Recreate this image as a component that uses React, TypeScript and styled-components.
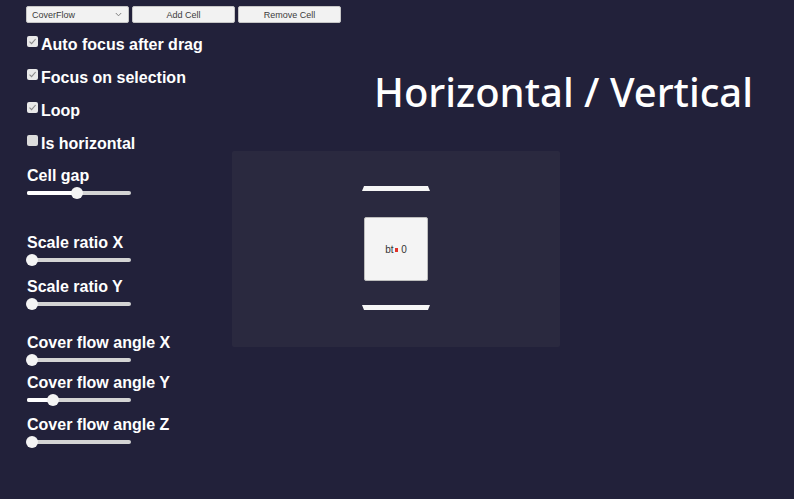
import React from 'react';
import styled, { createGlobalStyle } from 'styled-components';

const GlobalStyle = createGlobalStyle`
  html, body {
    margin: 0;
    padding: 0;
    background: #22213a;
    width: 794px;
    height: 499px;
    overflow: hidden;
  }
  body {
    font-family: "Liberation Sans", Arial, sans-serif;
  }
`;

const Page = styled.div`
  width: 794px;
  height: 499px;
  background: #22213a;
  display: flex;
  flex-direction: column;
`;

const Toolbar = styled.div`
  display: flex;
  gap: 3px;
  padding: 6px 0 0 26px;
`;

const Control = styled.div<{ $width: number }>`
  width: ${(p) => p.$width}px;
  height: 17px;
  box-sizing: border-box;
  background: #f2f2f2;
  border: 1px solid #c6c6c6;
  border-radius: 2px;
  font-size: 9px;
  color: #3c3c3c;
  display: flex;
  align-items: center;
  justify-content: center;
`;

const Select = styled(Control)`
  justify-content: space-between;
  padding: 0 6px 0 5px;
`;

const Main = styled.div`
  display: flex;
`;

const Sidebar = styled.div`
  width: 205px;
  padding-left: 27px;
  padding-top: 12px;
  display: flex;
  flex-direction: column;
`;

const CheckRow = styled.label`
  display: flex;
  align-items: flex-start;
  height: 33px;
  color: #ffffff;
  font-size: 16px;
  font-weight: bold;
`;

const Box = styled.span<{ $checked: boolean }>`
  width: 11px;
  height: 11px;
  margin-top: 1px;
  margin-right: 3px;
  box-sizing: border-box;
  background: ${(p) => (p.$checked ? '#e9e9e9' : '#dcdcdc')};
  border-radius: 2px;
  display: flex;
  align-items: center;
  justify-content: center;
`;

const CheckText = styled.span`
  line-height: 18px;
  padding-top: 1px;
`;

const SliderLabel = styled.div<{ $gap: number }>`
  margin-top: ${(p) => p.$gap}px;
  color: #ffffff;
  font-size: 16px;
  font-weight: bold;
  line-height: 18px;
`;

const Track = styled.div`
  position: relative;
  width: 104px;
  height: 4px;
  margin: 6px 0 4px;
  background: #d4d4d4;
  border-radius: 2px;
`;

const Fill = styled.div`
  height: 100%;
  background: #ffffff;
  border-radius: 2px;
`;

const Thumb = styled.div`
  position: absolute;
  top: -4px;
  width: 12px;
  height: 12px;
  margin-left: -6px;
  border-radius: 50%;
  background: #f4f4f4;
`;

const Stage = styled.div`
  display: flex;
  flex-direction: column;
  padding-top: 42px;
`;

const Title = styled.h1`
  margin: 0 0 32px 142px;
  font-family: "Noto Sans", "Open Sans", sans-serif;
  font-weight: 500;
  font-size: 40px;
  line-height: 54px;
  color: #ffffff;
  white-space: nowrap;
`;

const Panel = styled.div`
  width: 328px;
  height: 196px;
  background: #2a293f;
  border-radius: 2px;
  display: flex;
  flex-direction: column;
  align-items: center;
  padding-top: 35px;
  box-sizing: border-box;
`;

const Sliver = styled.div<{ $flip?: boolean }>`
  width: 68px;
  height: 5px;
  background: #f6f6f6;
  clip-path: ${(p) =>
    p.$flip ? 'polygon(0 0, 100% 0, 97% 100%, 3% 100%)' : 'polygon(3% 0, 97% 0, 100% 100%, 0 100%)'};
`;

const Cell = styled.div`
  width: 64px;
  height: 64px;
  margin: 26px 0 24px;
  box-sizing: border-box;
  background: #f4f4f4;
  border: 1px solid #bdbdbd;
  border-radius: 2px;
  display: flex;
  align-items: center;
  justify-content: center;
  font-size: 10px;
  color: #333;
  white-space: pre;
`;

const Cursor = styled.span`
  display: inline-block;
  width: 3px;
  height: 4px;
  background: #e0322a;
  margin: 1px 1px 0 1px;
`;

const checks = [
  { label: 'Auto focus after drag', checked: true },
  { label: 'Focus on selection', checked: true },
  { label: 'Loop', checked: true },
  { label: 'Is horizontal', checked: false },
];

const sliders = [
  { label: 'Cell gap', value: 0.48, gap: 0 },
  { label: 'Scale ratio X', value: 0.05, gap: 35 },
  { label: 'Scale ratio Y', value: 0.05, gap: 12 },
  { label: 'Cover flow angle X', value: 0.05, gap: 24 },
  { label: 'Cover flow angle Y', value: 0.25, gap: 8 },
  { label: 'Cover flow angle Z', value: 0.05, gap: 10 },
];

const Check = () => (
  <svg width="9" height="9" viewBox="0 0 9 9">
    <path d="M1.5 4.6 L3.6 6.7 L7.6 2" fill="none" stroke="#8a8a8a" strokeWidth="1.1" />
  </svg>
);

export default function App() {
  return (
    <Page>
      <GlobalStyle />
      <Toolbar>
        <Select $width={103}>
          <span>CoverFlow</span>
          <svg width="7" height="5" viewBox="0 0 7 5">
            <path d="M0.8 1 L3.5 3.8 L6.2 1" fill="none" stroke="#777" strokeWidth="0.9" />
          </svg>
        </Select>
        <Control $width={103}>Add Cell</Control>
        <Control $width={103}>Remove Cell</Control>
      </Toolbar>
      <Main>
        <Sidebar>
          {checks.map((c) => (
            <CheckRow key={c.label}>
              <Box $checked={c.checked}>{c.checked && <Check />}</Box>
              <CheckText>{c.label}</CheckText>
            </CheckRow>
          ))}
          {sliders.map((s) => (
            <React.Fragment key={s.label}>
              <SliderLabel $gap={s.gap}>{s.label}</SliderLabel>
              <Track>
                <Fill style={{ width: `${s.value * 100}%` }} />
                <Thumb style={{ left: `${s.value * 100}%` }} />
              </Track>
            </React.Fragment>
          ))}
        </Sidebar>
        <Stage>
          <Title>Horizontal / Vertical</Title>
          <Panel>
            <Sliver />
            <Cell>
              {'bt'}
              <Cursor />
              {' 0'}
            </Cell>
            <Sliver $flip />
          </Panel>
        </Stage>
      </Main>
    </Page>
  );
}
